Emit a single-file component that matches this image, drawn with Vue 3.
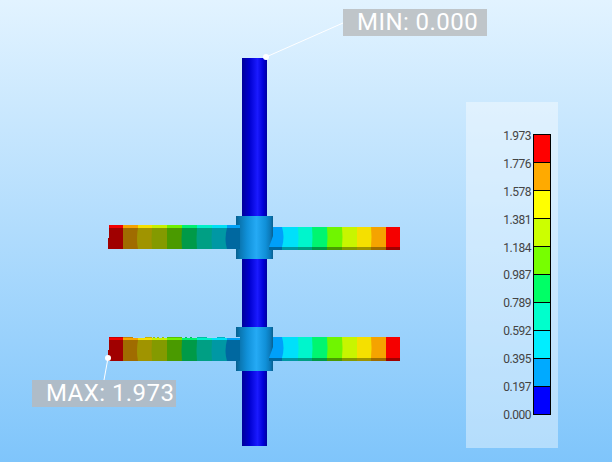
<script setup>
const ticks = ['1.973', '1.776', '1.578', '1.381', '1.184', '0.987', '0.789', '0.592', '0.395', '0.197', '0.000']
const cells = ['#ff0000', '#ffaa00', '#ffff00', '#ccff00', '#77ff00', '#00ff66', '#00ffcc', '#00eeff', '#00aaff', '#0000ff']

// left arm, tip to collar: top strip colour and darker body colour
const leftSegs = [
  { x: 109, end: 123, top: '#f20000', body: '#a00000', bulge: 0 },
  { x: 123, end: 138, top: '#f5a300', body: '#a06c00', bulge: 0 },
  { x: 138, end: 152, top: '#f5e000', body: '#a09400', bulge: 2 },
  { x: 152, end: 167, top: '#c8f000', body: '#849a00', bulge: 1 },
  { x: 167, end: 182, top: '#70f000', body: '#4a9a00', bulge: 0 },
  { x: 182, end: 197, top: '#00f070', body: '#009a48', bulge: 1 },
  { x: 197, end: 212, top: '#00f0c8', body: '#009f84', bulge: 1 },
  { x: 212, end: 227, top: '#00e0f5', body: '#0098a4', bulge: 1 },
  { x: 227, end: 240, top: '#00a0f5', body: '#0068a0', bulge: 3 }
]
// right arm, tip first so that nearer segments paint over the curved edge
const rightSegs = [
  { x: 386, end: 400, top: '#f50000', bottom: '#a00000', bulge: 0 },
  { x: 371, end: 386, top: '#f5a300', bottom: '#a06c00', bulge: 0 },
  { x: 357, end: 371, top: '#f5e000', bottom: '#a09400', bulge: 1 },
  { x: 342, end: 357, top: '#c8f500', bottom: '#849a00', bulge: 0 },
  { x: 327, end: 342, top: '#70f500', bottom: '#4a9a00', bulge: 1 },
  { x: 312, end: 327, top: '#00f570', bottom: '#009a48', bulge: 1 },
  { x: 298, end: 312, top: '#00f5cc', bottom: '#009f84', bulge: 1 },
  { x: 282, end: 298, top: '#00e0fa', bottom: '#0098a4', bulge: 1 },
  { x: 270, end: 282, top: '#00a0fa', bottom: '#0068a0', bulge: 3 }
]
// broken first row along the top of the lower left arm
const topDashes = [
  [109, 14, '#c80000'], [123, 10, '#c88400'], [145, 7, '#c8b400'], [153, 2, '#a0c000'], [157, 2, '#a0c000'],
  [162, 2, '#a0c000'], [167, 15, '#58c000'], [185, 2, '#00c058'], [190, 2, '#00c058'], [197, 10, '#00c0a0'], [217, 8, '#00b4c4']
]
const joints = [
  { key: 'upper', leftY: 225, rightY: 227, rightEnd: 250, collarY: 216, collarH: 43 },
  { key: 'lower', leftY: 337, rightY: 337, rightEnd: 361, collarY: 327, collarH: 44 }
]

function leftBody(s, y) {
  return `M${s.x} ${y}H${s.end}V${y + 21}H${s.x}Q${s.x - s.bulge} ${y + 11} ${s.x} ${y}Z`
}

function rightFace(s, j) {
  const bottom = j.rightEnd - 3
  return `M${s.x} ${j.rightY}H${s.end}Q${s.end + s.bulge} ${(j.rightY + bottom) / 2} ${s.end} ${bottom}H${s.x}Z`
}
</script>

<template>
  <div class="viewport">
    <svg class="scene" width="612" height="462" viewBox="0 0 612 462">
      <defs>
        <linearGradient id="column" x1="0" x2="1" y1="0" y2="0">
          <stop offset="0" stop-color="#00009a" />
          <stop offset="0.3" stop-color="#0000d0" />
          <stop offset="0.62" stop-color="#1a1aff" />
          <stop offset="0.85" stop-color="#0000d8" />
          <stop offset="1" stop-color="#00009e" />
        </linearGradient>
        <linearGradient id="collar" x1="0" x2="1" y1="0" y2="0">
          <stop offset="0" stop-color="#06608f" />
          <stop offset="0.12" stop-color="#0a78b4" />
          <stop offset="0.3" stop-color="#1090d8" />
          <stop offset="0.55" stop-color="#25aaf5" />
          <stop offset="0.8" stop-color="#1090d8" />
          <stop offset="0.93" stop-color="#0b78b8" />
          <stop offset="1" stop-color="#08608f" />
        </linearGradient>
      </defs>

      <path d="M242 58H265L267 60V446H242Z" fill="url(#column)" />

      <g v-for="j in joints" :key="j.key">
        <!-- right arm -->
        <g v-for="s in rightSegs" :key="s.x">
          <rect :x="s.x" :y="j.rightEnd - 3" :width="s.end - s.x" height="3" :fill="s.bottom" />
          <path :d="rightFace(s, j)" :fill="s.top" />
        </g>
        <!-- collar -->
        <rect x="236" :y="j.collarY" width="37" :height="j.collarH" fill="url(#collar)" />
        <path :d="`M273 ${j.rightEnd - 14}V${j.rightEnd - 3}H269Z`" fill="#00a0fa" />
        <rect x="269" :y="j.rightEnd - 3" width="4" height="3" fill="#0068a0" />
        <!-- left arm -->
        <rect x="108" :y="j.leftY + 13" width="4" height="11" fill="#a00000" />
        <g v-for="s in leftSegs" :key="s.x">
          <path :d="leftBody(s, j.leftY + 3)" :fill="s.body" />
          <rect :x="s.x" :y="j.leftY" :width="s.end - s.x" height="3" :fill="s.top" />
        </g>
      </g>

      <!-- lower arm: first row is broken up -->
      <rect x="109" y="337" width="131" height="1" fill="#9fd4fd" />
      <rect v-for="d in topDashes" :key="d[0]" :x="d[0]" y="337" :width="d[1]" height="1" :fill="d[2]" />

      <!-- label leader lines -->
      <polyline points="343,23 266,57" class="leader" />
      <circle cx="266" cy="57" r="3" fill="#fff" />
      <polyline points="104,380 108,358" class="leader" />
      <circle cx="108" cy="358" r="3" fill="#fff" />
    </svg>

    <div class="tag tag-min">MIN: 0.000</div>
    <div class="tag tag-max">MAX: 1.973</div>

    <div class="legend">
      <div class="legend-ticks">
        <span v-for="t in ticks" :key="t">{{ t }}</span>
      </div>
      <div class="legend-bar">
        <div v-for="c in cells" :key="c" class="legend-cell" :style="{ background: c }"></div>
      </div>
    </div>
  </div>
</template>

<style scoped>
.viewport {
  position: relative;
  width: 612px;
  height: 462px;
  overflow: hidden;
  background: linear-gradient(180deg, #e2f3ff 0%, #7fc5fb 100%);
  font-family: Roboto, sans-serif;
}

.scene {
  position: absolute;
  inset: 0;
}

.leader {
  fill: none;
  stroke: #fff;
  stroke-width: 1;
}

.tag {
  position: absolute;
  box-sizing: border-box;
  width: 144px;
  height: 27px;
  padding-left: 14px;
  font-size: 24px;
  line-height: 27px;
  letter-spacing: 0.45px;
  color: #fff;
  white-space: nowrap;
}

.tag-min {
  left: 343px;
  top: 9px;
  background: #bfc5c9;
}

.tag-max {
  left: 32px;
  top: 380px;
  background: #afbcc8;
}

.legend {
  position: absolute;
  left: 466px;
  top: 102px;
  width: 92px;
  height: 346px;
  box-sizing: border-box;
  padding: 32px 7px 0 0;
  display: flex;
  justify-content: flex-end;
  align-items: flex-start;
  gap: 2px;
  background: rgba(255, 255, 255, 0.4);
}

.legend-ticks {
  display: flex;
  flex-direction: column;
  justify-content: space-between;
  align-items: flex-end;
  height: 293px;
  margin-top: -5px;
  font-size: 12px;
  line-height: 14px;
  letter-spacing: -0.5px;
  color: #444;
}

.legend-bar {
  display: flex;
  flex-direction: column;
  width: 18px;
  height: 281px;
  box-sizing: border-box;
  border: 1px solid #000;
}

.legend-cell {
  flex: 1;
  border-bottom: 1px solid #000;
}

.legend-cell:last-child {
  border-bottom: 0;
}
</style>
